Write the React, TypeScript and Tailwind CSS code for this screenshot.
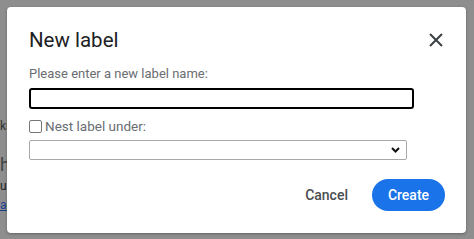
import React from "react";

export default function App() {
  return (
    <div className="relative w-[474px] h-[239px] bg-[#8e8e8e] overflow-hidden" style={{ fontFamily: "Roboto, 'Liberation Sans', sans-serif" }}>
      {/* background fragments */}
      <div className="absolute left-0 top-[120px] text-[12px] text-[#333] leading-none">ks</div>
      <div className="absolute left-0 top-[156px] text-[18px] text-[#444] leading-none">h</div>
      <div className="absolute left-0 top-[180px] text-[12px] text-[#222] leading-none">u</div>
      <div className="absolute left-0 top-[199px] text-[12px] text-[#1a3d8f] underline leading-none">ac</div>
      <div className="absolute left-[7px] top-[7px] w-[459px] h-[226px] bg-white rounded-[4px] shadow-[0_1px_3px_rgba(0,0,0,0.3)] flex flex-col pl-[22px] pr-[21px]">
        <div className="flex items-center justify-between pt-[19px]">
          <div className="text-[20.5px] text-[#202124] leading-[28px]">New label</div>
          <svg width="16" height="16" viewBox="0 0 16 16" className="mr-[1px]">
            <path d="M2 2 L14 14 M14 2 L2 14" stroke="#3c4043" strokeWidth="2" />
          </svg>
        </div>
        <div className="mt-[11px] text-[13px] text-[#6a6d71] leading-[18px]">Please enter a new label name:</div>
        <div className="mt-[5px] w-[385px] h-[21px] border-2 border-black rounded-[3px]"></div>
        <div className="mt-[8px] flex items-center gap-[3px]">
          <div className="w-[13px] h-[13px] border border-[#777] rounded-[2px]"></div>
          <span className="text-[13.5px] text-[#6a6d71] leading-[18px]">Nest label under:</span>
        </div>
        <div className="mt-[5px] w-[378px] h-[20px] border border-[#a8a8a8] rounded-[2px] flex items-center justify-end pr-[6px]">
          <svg width="9" height="6" viewBox="0 0 9 6">
            <path d="M1 1 L4.5 4.5 L8 1" stroke="#111" strokeWidth="2" fill="none" />
          </svg>
        </div>
        <div className="mt-auto mb-[22px] flex items-center justify-end gap-[24px]">
          <span className="text-[14px] text-[#4a4d51] font-medium">Cancel</span>
          <div className="w-[73px] h-[32px] rounded-full bg-[#1a73e8] text-white text-[14px] font-medium flex items-center justify-center">Create</div>
        </div>
      </div>
    </div>
  );
}
